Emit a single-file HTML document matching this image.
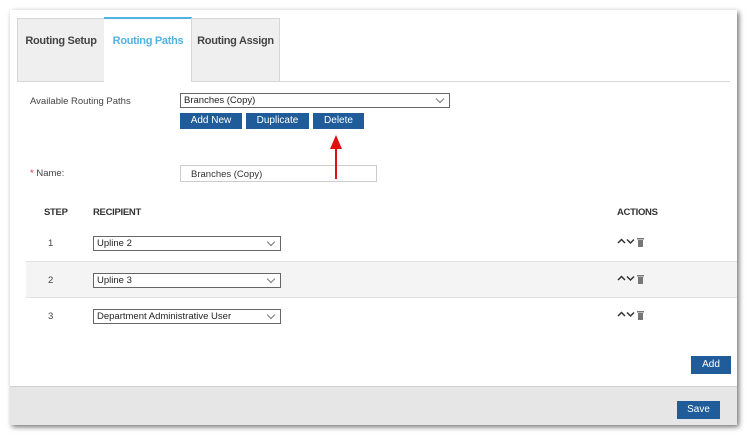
<!DOCTYPE html>
<html><head><meta charset="utf-8"><style>
*{box-sizing:border-box;margin:0;padding:0}
body{width:749px;height:436px;background:#fff;font-family:"Liberation Sans",sans-serif;position:relative;overflow:hidden;color:#333}
.a{position:absolute}
.panel{left:10px;top:10px;width:727px;height:415px;background:#fff;box-shadow:2px 2px 5px rgba(0,0,0,.55)}
.foot{left:10px;top:386px;width:727px;height:39px;background:#e6e6e6;border-top:1px solid #d0d0d0}
.tab{top:18px;height:64px;background:#efefef;border:1px solid #d6d6d6;font-weight:bold;font-size:11px;color:#444;padding:16px 0 0 0;text-align:center;letter-spacing:-.3px}
.btn{background:#1f5c99;color:#fff;font-size:10px;text-align:center;line-height:16px;height:16px}
.sel{border:1px solid #666;background:#fff;font-size:9.5px;padding-left:3px;line-height:13px;height:15px;color:#222}
.sel:after{content:"";position:absolute;right:6px;top:2px;width:5px;height:5px;border-right:1px solid #777;border-bottom:1px solid #777;transform:rotate(45deg)}
.lbl{font-size:9.5px;color:#444}
.h{font-size:9.5px;font-weight:bold;color:#333;letter-spacing:-.3px}
</style></head><body>
<div class="a panel"></div>
<div class="a foot"></div>
<div class="a tab" style="left:17px;width:88px">Routing Setup</div>
<div class="a" style="left:104px;top:17px;width:88px;height:65px;background:#fff;border-top:2px solid #4fb3e3;font-weight:bold;font-size:11px;color:#4fb3e3;text-align:center;padding-top:16px;letter-spacing:-.3px">Routing Paths</div>
<div class="a tab" style="left:191px;width:89px">Routing Assign</div>
<div class="a" style="left:280px;top:81px;width:450px;height:1px;background:#d6d6d6"></div>

<div class="a lbl" style="left:30px;top:96px">Available Routing Paths</div>
<div class="a sel" style="left:180px;top:93px;width:270px">Branches (Copy)</div>
<div class="a btn" style="left:180px;top:113px;width:62px">Add New</div>
<div class="a btn" style="left:246px;top:113px;width:63px">Duplicate</div>
<div class="a btn" style="left:313px;top:113px;width:51px">Delete</div>

<div class="a lbl" style="left:30px;top:168px"><span style="color:#d33">*</span> Name:</div>
<div class="a" style="left:180px;top:165px;width:197px;height:17px;border:1px solid #ccc;background:#fff;font-size:9.5px;padding:3px 0 0 10px;color:#333">Branches (Copy)</div>
<svg class="a" style="left:329px;top:133px" width="14" height="48"><path d="M7 46 L7 12" stroke="#e01010" stroke-width="2"/><path d="M1 16 L7 2 L13 16 Z" fill="#e01010"/></svg>

<div class="a h" style="left:44px;top:207px">STEP</div>
<div class="a h" style="left:93px;top:207px">RECIPIENT</div>
<div class="a h" style="left:617px;top:207px">ACTIONS</div>

<div class="a" style="left:26px;top:261px;width:711px;height:37px;background:#f4f4f4;border-top:1px solid #e2e2e2;border-bottom:1px solid #e2e2e2"></div>

<div class="a lbl" style="left:48px;top:238px">1</div>
<div class="a sel" style="left:93px;top:236px;width:188px">Upline 2</div>
<div class="a lbl" style="left:48px;top:275px">2</div>
<div class="a sel" style="left:93px;top:273px;width:188px">Upline 3</div>
<div class="a lbl" style="left:48px;top:311px">3</div>
<div class="a sel" style="left:93px;top:309px;width:188px">Department Administrative User</div>

<svg class="a" style="left:617px;top:236px" width="32" height="12"><path d="M1 7 L4.5 3.5 L8 7 M10 3.5 L13.5 7 L17 3.5" stroke="#333" stroke-width="1.5" fill="none"/><rect x="20" y="2" width="7" height="1.5" fill="#777"/><rect x="21" y="4" width="5" height="7" fill="#777"/></svg>
<svg class="a" style="left:617px;top:273px" width="32" height="12"><path d="M1 7 L4.5 3.5 L8 7 M10 3.5 L13.5 7 L17 3.5" stroke="#333" stroke-width="1.5" fill="none"/><rect x="20" y="2" width="7" height="1.5" fill="#777"/><rect x="21" y="4" width="5" height="7" fill="#777"/></svg>
<svg class="a" style="left:617px;top:309px" width="32" height="12"><path d="M1 7 L4.5 3.5 L8 7 M10 3.5 L13.5 7 L17 3.5" stroke="#333" stroke-width="1.5" fill="none"/><rect x="20" y="2" width="7" height="1.5" fill="#777"/><rect x="21" y="4" width="5" height="7" fill="#777"/></svg>

<div class="a btn" style="left:691px;top:356px;width:40px;height:18px;line-height:18px">Add</div>
<div class="a btn" style="left:677px;top:401px;width:43px;height:18px;line-height:18px">Save</div>
</body></html>
